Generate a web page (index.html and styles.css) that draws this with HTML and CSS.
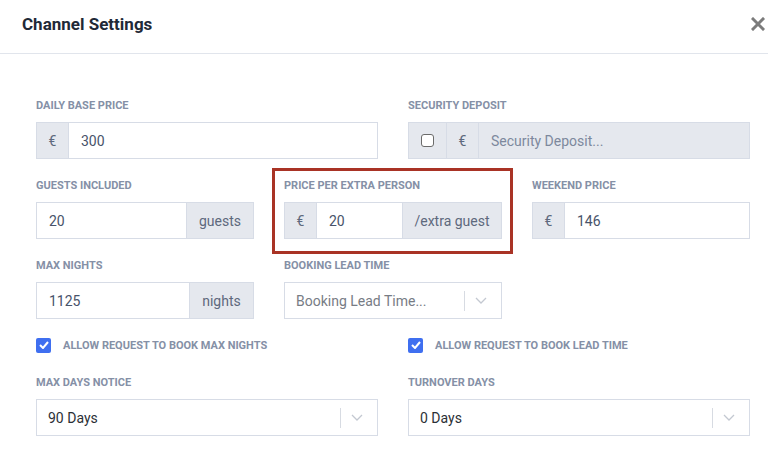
FILE: index.html
```html
<!DOCTYPE html>
<html lang="en">
<head>
  <meta charset="UTF-8">
  <title>Channel Settings</title>
  <meta name="viewport" content="width=device-width, initial-scale=1.0">
  <link rel="stylesheet" href="styles.css">
</head>
<body>
  <div class="modal">
    <div class="modal-header">
      <div class="modal-title">Channel Settings</div>
      <button class="modal-close" aria-label="Close">
        <svg width="14" height="14" viewBox="0 0 14 14">
          <path d="M2 2 L12 12 M12 2 L2 12" stroke="#7b7b7b" stroke-width="3" stroke-linecap="square"/>
        </svg>
      </button>
    </div>

    <div class="modal-body">
      <!-- pricing -->
      <div class="row cols-2">
        <div class="field">
          <div class="label">Daily Base Price</div>
          <div class="input-group">
            <span class="addon addon-cur">€</span>
            <span class="value">300</span>
          </div>
        </div>
        <div class="field">
          <div class="label">Security Deposit</div>
          <div class="input-group disabled">
            <span class="addon addon-check"><span class="box"></span></span>
            <span class="addon addon-cur">€</span>
            <span class="value placeholder">Security Deposit...</span>
          </div>
        </div>
      </div>

      <div class="row cols-3">
        <div class="field">
          <div class="label">Guests Included</div>
          <div class="input-group">
            <span class="value">20</span>
            <span class="addon addon-right w-guests">guests</span>
          </div>
        </div>
        <div class="field highlight">
          <div class="label">Price per extra person</div>
          <div class="input-group">
            <span class="addon addon-cur">€</span>
            <span class="value">20</span>
            <span class="addon addon-right w-extra">/extra guest</span>
          </div>
        </div>
        <div class="field">
          <div class="label">Weekend Price</div>
          <div class="input-group">
            <span class="addon addon-cur">€</span>
            <span class="value">146</span>
          </div>
        </div>
      </div>

      <!-- stay limits -->
      <div class="row cols-3 row-tight">
        <div class="field">
          <div class="label">Max Nights</div>
          <div class="input-group">
            <span class="value">1125</span>
            <span class="addon addon-right w-nights">nights</span>
          </div>
        </div>
        <div class="field">
          <div class="label">Booking Lead Time</div>
          <div class="select">
            <span class="value placeholder-dark">Booking Lead Time...</span>
            <span class="select-sep"></span>
            <svg class="chevron" width="12" height="7" viewBox="0 0 12 7">
              <path d="M1 1 L6 6 L11 1" fill="none" stroke="#c3c8d1" stroke-width="1.3"/>
            </svg>
          </div>
        </div>
      </div>

      <div class="row cols-2 checks">
        <label class="check">
          <span class="check-box">
            <svg width="10" height="8" viewBox="0 0 10 8"><path d="M1 4 L4 7 L9 1" fill="none" stroke="#fff" stroke-width="2"/></svg>
          </span>
          Allow request to book max nights
        </label>
        <label class="check">
          <span class="check-box">
            <svg width="10" height="8" viewBox="0 0 10 8"><path d="M1 4 L4 7 L9 1" fill="none" stroke="#fff" stroke-width="2"/></svg>
          </span>
          Allow request to book lead time
        </label>
      </div>

      <div class="row cols-2">
        <div class="field">
          <div class="label">Max Days Notice</div>
          <div class="select">
            <span class="value dark">90 Days</span>
            <span class="select-sep"></span>
            <svg class="chevron" width="12" height="7" viewBox="0 0 12 7">
              <path d="M1 1 L6 6 L11 1" fill="none" stroke="#c3c8d1" stroke-width="1.3"/>
            </svg>
          </div>
        </div>
        <div class="field">
          <div class="label">Turnover Days</div>
          <div class="select">
            <span class="value dark">0 Days</span>
            <span class="select-sep"></span>
            <svg class="chevron" width="12" height="7" viewBox="0 0 12 7">
              <path d="M1 1 L6 6 L11 1" fill="none" stroke="#c3c8d1" stroke-width="1.3"/>
            </svg>
          </div>
        </div>
      </div>
    </div>
  </div>
</body>
</html>
```

FILE: styles.css
```css
* { box-sizing: border-box; }
body {
  margin: 0;
  font-family: Roboto, 'Liberation Sans', Arial, sans-serif;
  background: #fff;
  color: #2e3440;
  overflow: hidden;
}
.modal-header {
  height: 54px;
  border-bottom: 1px solid #e1e5ec;
  display: flex;
  align-items: center;
  justify-content: space-between;
  padding: 0 3px 6px 22px;
}
.modal-title {
  font-size: 17px;
  font-weight: 700;
  color: #1f2937;
}
.modal-close {
  border: none;
  background: none;
  padding: 0;
  width: 14px;
  height: 14px;
  display: flex;
}
.modal-body {
  padding: 45px 0 0 36px;
}
.row {
  display: grid;
  column-gap: 30px;
  margin-bottom: 20px;
}
.row-tight { margin-bottom: 17px; }
.cols-2 { grid-template-columns: repeat(2, 342px); }
.cols-3 { grid-template-columns: repeat(3, 218px); }
.field { position: relative; }
.label {
  font-size: 11px;
  line-height: 14px;
  font-weight: 700;
  text-transform: uppercase;
  color: #8590a6;
  margin-bottom: 9px;
}
.input-group, .select {
  display: flex;
  align-items: stretch;
  height: 37px;
  border: 1px solid #d7dce6;
  background: #fff;
}
.input-group.disabled { background: #e5e8ee; }
.addon {
  display: flex;
  align-items: center;
  justify-content: center;
  background: #e5e8ee;
  color: #5e697d;
  font-size: 14px;
  flex: none;
}
.addon-cur { width: 32px; border-right: 1px solid #d7dce6; }
.addon-right { border-left: 1px solid #d7dce6; }
.addon-check { width: 38px; border-right: 1px solid #d7dce6; }
.w-guests { width: 67px; }
.w-extra { width: 99px; }
.w-nights { width: 64px; }
.box {
  width: 13px;
  height: 13px;
  border: 1.5px solid #6b6b6b;
  border-radius: 3px;
  background: #fff;
}
.value {
  flex: 1;
  display: flex;
  align-items: center;
  padding-left: 12px;
  font-size: 14px;
  color: #48536a;
  white-space: nowrap;
  overflow: hidden;
}
.placeholder { color: #7d889d; }
.placeholder-dark { color: #777c85; padding-left: 11px; }
.dark { color: #2b2f36; padding-left: 11px; }
.select { align-items: center; }
.select-sep {
  width: 1px;
  height: 20px;
  background: #d7dbe2;
}
.chevron { margin: 0 14px 0 10px; }

/* red annotation frame */
.highlight::after {
  content: '';
  position: absolute;
  top: -11px;
  left: -12px;
  right: -11px;
  bottom: -15px;
  border: 3px solid #a93325;
  pointer-events: none;
}

.checks { margin-bottom: 22px; }
.check {
  display: flex;
  align-items: center;
  height: 18px;
  font-size: 11px;
  font-weight: 700;
  text-transform: uppercase;
  color: #8590a6;
}
.check-box {
  width: 15px;
  height: 15px;
  background: #3f6ff0;
  border-radius: 2px;
  display: flex;
  align-items: center;
  justify-content: center;
  margin-right: 12px;
}
```
